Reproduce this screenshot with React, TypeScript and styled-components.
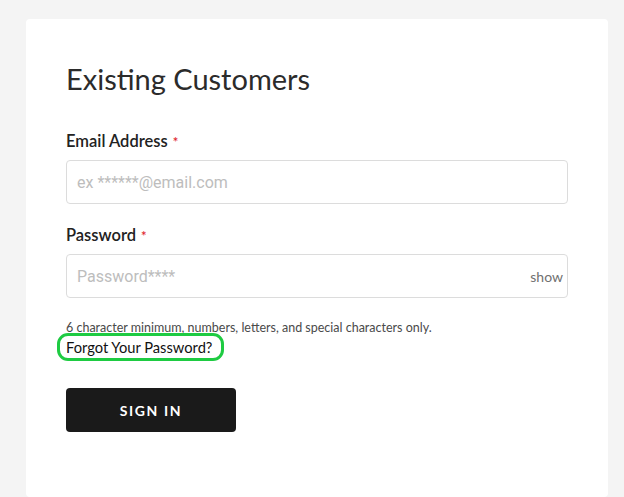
import { FC } from 'react';
import styled, { createGlobalStyle } from 'styled-components';

const GlobalStyle = createGlobalStyle`
  html, body {
    margin: 0;
    padding: 0;
    background: #f4f4f4;
  }
  body {
    font-family: Lato, 'Open Sans', sans-serif;
  }
  * {
    box-sizing: border-box;
  }
`;

const Page = styled.div`
  min-height: 497px;
  padding: 19px 16px 0 26px;
`;

const Card = styled.div`
  width: 582px;
  min-height: 478px;
  background: #ffffff;
  border-radius: 4px;
  padding: 44px 40px 40px 40px;
  display: flex;
  flex-direction: column;
  align-items: flex-start;
`;

const Title = styled.h1`
  margin: 0;
  font-size: 29px;
  line-height: 32px;
  font-weight: 400;
  color: #2b2b2b;
`;

const Label = styled.label<{ $top: number }>`
  display: block;
  margin-top: ${(p) => p.$top}px;
  margin-bottom: 8px;
  font-size: 16.5px;
  line-height: 20px;
  font-weight: 600;
  color: #222222;
`;

const Required = styled.span`
  color: #e0282e;
  margin-left: 5px;
  font-size: 13px;
`;

const Field = styled.div`
  width: 502px;
  height: 44px;
  border: 1px solid #dcdcdc;
  border-radius: 4px;
  display: flex;
  align-items: center;
  padding: 0 4px 0 10px;
`;

const TextInput = styled.input`
  flex: 1;
  min-width: 0;
  border: none;
  outline: none;
  background: transparent;
  font-family: Roboto, 'Liberation Sans', sans-serif;
  font-size: 16px;
  color: #333333;
  padding: 0;
  &::placeholder {
    color: #bdbdbd;
  }
`;

const ShowToggle = styled.button`
  border: none;
  background: none;
  padding: 0;
  font-family: Lato, sans-serif;
  font-size: 14px;
  color: #707070;
  cursor: pointer;
`;

const Hint = styled.p`
  margin: 22px 0 0 0;
  font-size: 12.5px;
  line-height: 16px;
  color: #4a4a4a;
`;

const ForgotLink = styled.a`
  display: inline-block;
  margin-left: -6px;
  padding: 3px 9px 3px 6px;
  font-size: 14.7px;
  line-height: 16px;
  color: #111111;
  text-decoration: none;
  border-radius: 8px;
  outline: 3px solid #1ecb42;
`;

const SignInButton = styled.button`
  margin-top: 30px;
  width: 170px;
  height: 44px;
  border: none;
  border-radius: 4px;
  background: #1a1a1a;
  color: #ffffff;
  font-family: Lato, sans-serif;
  font-size: 14px;
  font-weight: 700;
  letter-spacing: 1.6px;
  cursor: pointer;
`;

const App: FC = () => {
  return (
    <>
      <GlobalStyle />
      <Page>
        <Card>
          <Title>Existing Customers</Title>

          <Label $top={36} htmlFor="email">
            Email Address<Required>*</Required>
          </Label>
          <Field>
            <TextInput id="email" type="email" placeholder="ex ******@email.com" />
          </Field>

          <Label $top={21} htmlFor="password">
            Password<Required>*</Required>
          </Label>
          <Field>
            <TextInput id="password" type="password" placeholder="Password****" />
            <ShowToggle type="button">show</ShowToggle>
          </Field>

          <Hint>6 character minimum, numbers, letters, and special characters only.</Hint>
          <ForgotLink href="#">Forgot Your Password?</ForgotLink>

          <SignInButton type="button">SIGN IN</SignInButton>
        </Card>
      </Page>
    </>
  );
};

export default App;
